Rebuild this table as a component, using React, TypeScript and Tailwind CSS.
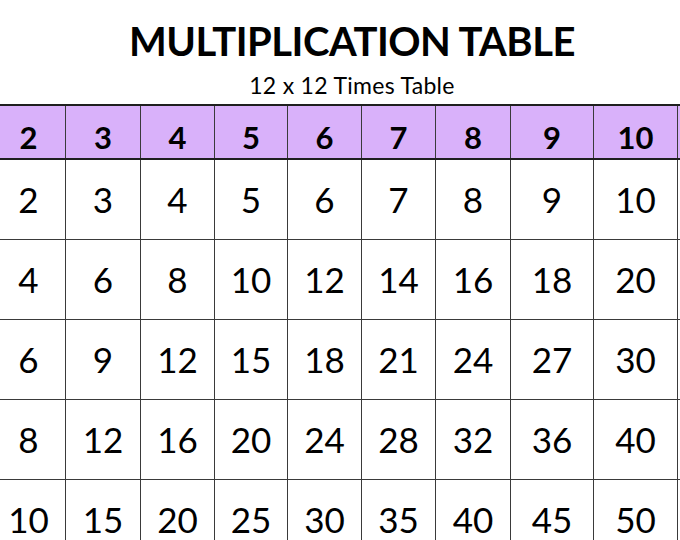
const columns = [2, 3, 4, 5, 6, 7, 8, 9, 10, 11]
const rows = [1, 2, 3, 4, 5]

// the 11 column is cut by the right edge, only its left border shows
const visible = (c: number) => c <= 10

export default function App() {
  return (
    <div className="h-[540px] w-[680px] overflow-hidden bg-white font-['Lato',sans-serif] text-black">
      <div className="pl-[24px] pt-[21px] text-center">
        <h1 className="text-[40px] font-bold leading-none tracking-[-0.5px]">MULTIPLICATION TABLE</h1>
        <p className="mt-[13px] text-[23px] leading-none tracking-[0.3px]">12 x 12 Times Table</p>
      </div>

      <div className="mt-[7px] -ml-[8px] w-max">
        <div className="grid grid-cols-[74px_75px_74px_73px_74px_74px_75px_83px_84px_80px] border-y-2 border-[#1f1f1f] bg-[#d9b1fa]">
          {columns.map((c) => (
            <div
              key={c}
              className="flex h-[52px] items-center justify-center border-r border-[#3a3a3a] pt-[10px] text-[31px] font-bold leading-none"
            >
              {visible(c) ? c : ""}
            </div>
          ))}
        </div>

        {rows.map((r) => (
          <div
            key={r}
            className="grid grid-cols-[74px_75px_74px_73px_74px_74px_75px_83px_84px_80px] border-b border-[#3a3a3a]"
          >
            {columns.map((c) => (
              <div
                key={c}
                className="flex h-[79px] items-center justify-center border-r border-[#3a3a3a] text-[35px] leading-none"
              >
                {visible(c) ? r * c : ""}
              </div>
            ))}
          </div>
        ))}
      </div>
    </div>
  )
}
